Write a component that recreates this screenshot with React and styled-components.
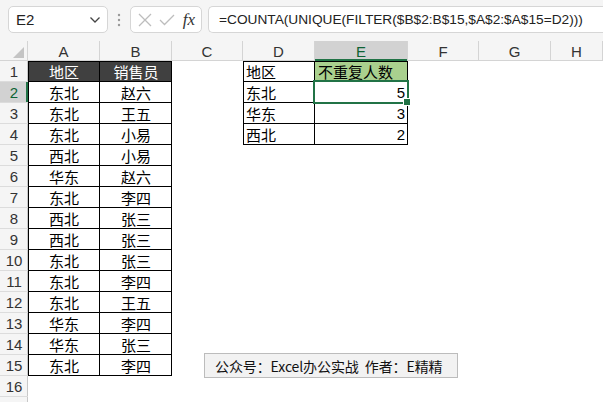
import React from 'react';
import styled, { createGlobalStyle } from 'styled-components';

const GlobalStyle = createGlobalStyle`
  html, body {
    margin: 0;
    padding: 0;
    background: #ffffff;
    overflow: hidden;
  }
  body {
    font-family: "Noto Sans CJK SC", "Liberation Sans", sans-serif;
  }
`;

const Page = styled.div`
  width: 603px;
  height: 402px;
  overflow: hidden;
  position: relative;
  background: #ffffff;
`;

const FormulaBar = styled.div`
  height: 41px;
  background: #f5f5f5;
  display: flex;
  align-items: flex-start;
  padding: 6px 0 0 8px;
  box-sizing: border-box;
`;

const Box = styled.div`
  height: 27px;
  box-sizing: border-box;
  background: #ffffff;
  border: 1px solid #d6d6d6;
  border-radius: 5px;
  display: flex;
  align-items: center;
`;

const NameBox = styled(Box)`
  width: 100px;
  padding: 0 6px 0 7px;
  justify-content: space-between;
  font-family: "Liberation Sans", sans-serif;
  font-size: 15px;
  color: #222;
`;

const Dots = styled.div`
  width: 22px;
  display: flex;
  justify-content: center;
  padding-top: 7px;
`;

const FxBox = styled(Box)`
  width: 72px;
  padding: 0 6px 0 7px;
  justify-content: space-between;
`;

const Fx = styled.span`
  font-family: "Liberation Serif", serif;
  font-style: italic;
  font-size: 17px;
  color: #333;
  line-height: 1;
`;

const FormulaBox = styled(Box)`
  flex: 1;
  margin-left: 6px;
  border-right: none;
  border-radius: 5px 0 0 5px;
  padding-left: 10px;
  font-family: "Liberation Sans", sans-serif;
  font-size: 13.7px;
  color: #222;
  white-space: nowrap;
  overflow: hidden;
`;

const Sheet = styled.div`
  display: grid;
  grid-template-columns: 28px 72px 72px 71px 72px 93px 71px 72px 1fr;
  grid-template-rows: 20px;
  grid-auto-rows: 21px;
  position: relative;
`;

const ColHead = styled.div`
  background: ${p => (p.$active ? '#d2d2d2' : '#f5f5f5')};
  color: ${p => (p.$active ? '#0e6334' : '#333')};
  border-right: 1px solid #d4d4d4;
  box-shadow: inset 0 ${p => (p.$active ? '-2px' : '-1px')} 0 ${p => (p.$active ? '#217346' : '#d4d4d4')};
  font-family: "Liberation Sans", sans-serif;
  font-size: 15px;
  display: flex;
  align-items: center;
  justify-content: center;
  box-sizing: border-box;
`;

const Corner = styled(ColHead)`
  position: relative;
  svg { position: absolute; right: 3px; bottom: 3px; }
`;

const RowHead = styled.div`
  background: ${p => (p.$active ? '#d2d2d2' : '#f5f5f5')};
  color: ${p => (p.$active ? '#0e6334' : '#333')};
  box-shadow: inset 0 -1px 0 #dcdcdc,
    inset ${p => (p.$active ? '-2px' : '-1px')} 0 0 ${p => (p.$active ? '#217346' : '#c8c8c8')};
  font-family: "Liberation Sans", sans-serif;
  font-size: 15px;
  display: flex;
  align-items: center;
  justify-content: center;
`;

const Cell = styled.div`
  position: relative;
  display: flex;
  align-items: center;
  justify-content: ${p => p.$align || 'center'};
  padding: 0 3px;
  font-family: ${p => (p.$num ? '"Liberation Sans", sans-serif' : '"Noto Sans CJK SC", sans-serif')};
  font-size: 15px;
  color: ${p => (p.$dark ? '#ffffff' : '#000')};
  background: ${p => (p.$dark ? '#404040' : p.$fill || 'transparent')};
  white-space: nowrap;
  box-shadow: ${p =>
    p.$box
      ? [
          'inset -1px -1px 0 #000',
          p.$top ? 'inset 0 1px 0 #000' : null,
          p.$left ? 'inset 1px 0 0 #000' : null,
        ]
          .filter(Boolean)
          .join(', ')
      : 'none'};
`;

const Selection = styled.div`
  position: absolute;
  left: -2px;
  top: -2px;
  right: -1px;
  bottom: -1px;
  border: 2px solid #217346;
  pointer-events: none;
  z-index: 2;
  &::after {
    content: '';
    position: absolute;
    right: -4px;
    bottom: -4px;
    width: 6px;
    height: 6px;
    background: #217346;
    border: 1px solid #fff;
  }
`;

const Note = styled.div`
  position: absolute;
  left: 204px;
  top: 353px;
  width: 254px;
  height: 25px;
  box-sizing: border-box;
  background: #f2f2f2;
  border: 1px solid #bcbcbc;
  display: flex;
  align-items: center;
  padding-left: 10px;
  font-family: "Noto Sans CJK SC", sans-serif;
  font-size: 14px;
  color: #111;
  white-space: nowrap;
`;

const Narrow = styled.span`
  display: inline-block;
  letter-spacing: -0.1px;
`;

const cols = ['A', 'B', 'C', 'D', 'E', 'F', 'G', 'H'];

const regions = ['东北', '东北', '东北', '西北', '华东', '东北', '西北', '西北', '东北', '东北', '东北', '华东', '华东', '东北'];
const sellers = ['赵六', '王五', '小易', '小易', '赵六', '李四', '张三', '张三', '张三', '李四', '王五', '李四', '张三', '李四'];
const summary = [
  ['东北', 5],
  ['华东', 3],
  ['西北', 2],
];

const Chevron = () => (
  <svg width="12" height="8" viewBox="0 0 12 8">
    <path d="M1.5 1.5 L6 6 L10.5 1.5" fill="none" stroke="#444" strokeWidth="1.3" />
  </svg>
);

const VDots = () => (
  <svg width="4" height="14" viewBox="0 0 4 14">
    <circle cx="2" cy="2" r="1.2" fill="#999" />
    <circle cx="2" cy="7" r="1.2" fill="#999" />
    <circle cx="2" cy="12" r="1.2" fill="#999" />
  </svg>
);

const Cross = () => (
  <svg width="14" height="14" viewBox="0 0 14 14">
    <path d="M1 1 L13 13 M13 1 L1 13" stroke="#bdbdbd" strokeWidth="1.3" />
  </svg>
);

const Check = () => (
  <svg width="16" height="12" viewBox="0 0 16 12">
    <path d="M1 6 L5.5 10.5 L15 1" fill="none" stroke="#bdbdbd" strokeWidth="1.3" />
  </svg>
);

const renderRow = (r) => {
  const cells = [];
  const inData = r >= 1 && r <= 15;
  let a = null;
  let b = null;
  if (r === 1) {
    a = '地区';
    b = '销售员';
  } else if (inData) {
    a = regions[r - 2];
    b = sellers[r - 2];
  }
  cells.push(
    <Cell key="A" $box={inData} $left $top={r === 1} $dark={r === 1}>{a}</Cell>
  );
  cells.push(
    <Cell key="B" $box={inData} $top={r === 1} $dark={r === 1}>{b}</Cell>
  );
  cells.push(<Cell key="C" />);
  const inSum = r >= 1 && r <= 4;
  const d = r === 1 ? '地区' : inSum ? summary[r - 2][0] : null;
  const e = r === 1 ? '不重复人数' : inSum ? summary[r - 2][1] : null;
  cells.push(
    <Cell key="D" $align="flex-start" $box={inSum} $left $top={r === 1}>{d}</Cell>
  );
  cells.push(
    <Cell
      key="E"
      $align={r === 1 ? 'flex-start' : 'flex-end'}
      $num={r > 1}
      $box={inSum}
      $top={r === 1}
      $fill={r === 1 ? '#a9d08e' : null}
    >
      {e}
      {r === 2 && <Selection />}
    </Cell>
  );
  cells.push(<Cell key="F" />, <Cell key="G" />, <Cell key="H" />);
  return cells;
};

export default function App() {
  const rows = Array.from({ length: 17 }, (_, i) => i + 1);
  return (
    <Page>
      <GlobalStyle />
      <FormulaBar>
        <NameBox>
          <span>E2</span>
          <Chevron />
        </NameBox>
        <Dots>
          <VDots />
        </Dots>
        <FxBox>
          <Cross />
          <Check />
          <Fx>fx</Fx>
        </FxBox>
        <FormulaBox>=COUNTA(UNIQUE(FILTER($B$2:B$15,$A$2:$A$15=D2)))</FormulaBox>
      </FormulaBar>
      <Sheet>
        <Corner>
          <svg width="11" height="11" viewBox="0 0 11 11">
            <path d="M11 0 L11 11 L0 11 Z" fill="#c4c4c4" />
          </svg>
        </Corner>
        {cols.map(c => (
          <ColHead key={c} $active={c === 'E'}>{c}</ColHead>
        ))}
        {rows.map(r => (
          <React.Fragment key={r}>
            <RowHead $active={r === 2}>{r < 17 ? r : null}</RowHead>
            {renderRow(r)}
          </React.Fragment>
        ))}
      </Sheet>
      <Note>
        <Narrow>公众号：Excel办公实战&nbsp;&nbsp;作者：E精精</Narrow>
      </Note>
    </Page>
  );
}
